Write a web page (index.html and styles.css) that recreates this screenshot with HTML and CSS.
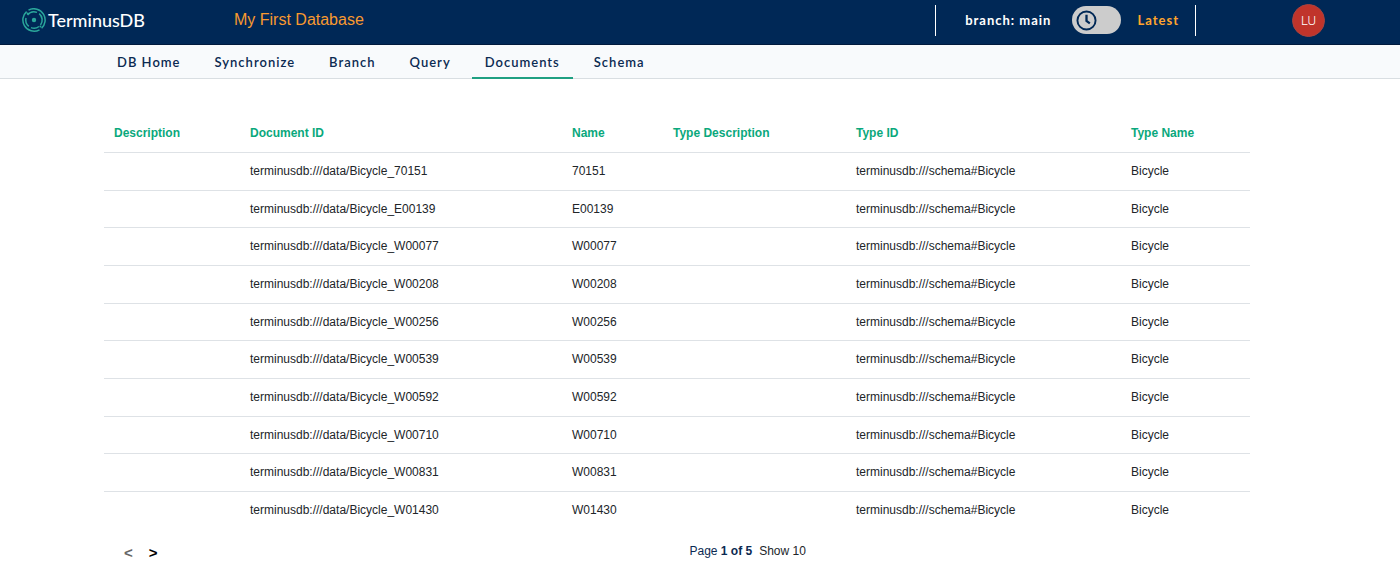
FILE: index.html
```html
<!DOCTYPE html>
<html lang="en">
<head>
    <meta charset="UTF-8">
    <meta name="viewport" content="width=device-width, initial-scale=1.0">
    <title>TerminusDB - Documents</title>
    <link rel="stylesheet" href="styles.css">
</head>
<body>
    <header class="top-bar">
        <a href="#" class="brand">
            <svg class="brand-logo" viewBox="0 0 24 24" fill="none" stroke="#2aa79b" stroke-width="1.5" aria-hidden="true">
                <path d="M6.5 2.1A11.2 11.2 0 0 1 21.6 6.4A11.2 11.2 0 0 1 19.6 20.2"/>
                <path d="M17.5 21.8A11.2 11.2 0 0 1 2.4 17.6A11.2 11.2 0 0 1 4.6 3.6"/>
                <path d="M5.5 7A8.2 8.2 0 0 1 15 4.4M17.2 5.7A8.2 8.2 0 0 1 18.5 17M17 18.5A8.2 8.2 0 0 1 9 19.6M6.8 18.3A8.2 8.2 0 0 1 4 10"/>
                <circle cx="12" cy="12" r="2.2" fill="#2aa79b" stroke="none"/>
                <circle cx="5.6" cy="5.6" r="1" fill="#2aa79b" stroke="none"/>
                <circle cx="18.4" cy="18.4" r="1" fill="#2aa79b" stroke="none"/>
            </svg>
            <span class="brand-name">TerminusDB</span>
        </a>
        <a href="#" class="db-name">My First Database</a>
        <div class="branch-box">
            <span class="branch-name">branch: main</span>
            <button type="button" class="time-toggle" aria-label="Time travel">
                <svg class="clock" viewBox="0 0 22 22" fill="none" stroke="#002856" stroke-width="2" aria-hidden="true">
                    <circle cx="11" cy="11" r="9.5"/>
                    <path d="M11 5V11.5L14.5 14" stroke-width="2.4"/>
                </svg>
            </button>
            <span class="latest">Latest</span>
        </div>
        <button type="button" class="avatar">LU</button>
    </header>

    <nav class="nav-bar">
        <a href="#" class="nav-link">DB Home</a>
        <a href="#" class="nav-link">Synchronize</a>
        <a href="#" class="nav-link">Branch</a>
        <a href="#" class="nav-link">Query</a>
        <a href="#" class="nav-link active">Documents</a>
        <a href="#" class="nav-link">Schema</a>
    </nav>

    <main class="content">
        <table class="documents">
            <colgroup>
                <col class="col-description">
                <col class="col-id">
                <col class="col-name">
                <col class="col-type-description">
                <col class="col-type-id">
                <col class="col-type-name">
            </colgroup>
            <thead>
                <tr><th>Description</th><th>Document ID</th><th>Name</th><th>Type Description</th><th>Type ID</th><th>Type Name</th></tr>
            </thead>
            <tbody>
                <tr><td></td><td>terminusdb:///data/Bicycle_70151</td><td>70151</td><td></td><td>terminusdb:///schema#Bicycle</td><td>Bicycle</td></tr>
                <tr><td></td><td>terminusdb:///data/Bicycle_E00139</td><td>E00139</td><td></td><td>terminusdb:///schema#Bicycle</td><td>Bicycle</td></tr>
                <tr><td></td><td>terminusdb:///data/Bicycle_W00077</td><td>W00077</td><td></td><td>terminusdb:///schema#Bicycle</td><td>Bicycle</td></tr>
                <tr><td></td><td>terminusdb:///data/Bicycle_W00208</td><td>W00208</td><td></td><td>terminusdb:///schema#Bicycle</td><td>Bicycle</td></tr>
                <tr><td></td><td>terminusdb:///data/Bicycle_W00256</td><td>W00256</td><td></td><td>terminusdb:///schema#Bicycle</td><td>Bicycle</td></tr>
                <tr><td></td><td>terminusdb:///data/Bicycle_W00539</td><td>W00539</td><td></td><td>terminusdb:///schema#Bicycle</td><td>Bicycle</td></tr>
                <tr><td></td><td>terminusdb:///data/Bicycle_W00592</td><td>W00592</td><td></td><td>terminusdb:///schema#Bicycle</td><td>Bicycle</td></tr>
                <tr><td></td><td>terminusdb:///data/Bicycle_W00710</td><td>W00710</td><td></td><td>terminusdb:///schema#Bicycle</td><td>Bicycle</td></tr>
                <tr><td></td><td>terminusdb:///data/Bicycle_W00831</td><td>W00831</td><td></td><td>terminusdb:///schema#Bicycle</td><td>Bicycle</td></tr>
                <tr><td></td><td>terminusdb:///data/Bicycle_W01430</td><td>W01430</td><td></td><td>terminusdb:///schema#Bicycle</td><td>Bicycle</td></tr>
            </tbody>
        </table>
        <div class="pager">
            <div class="pager-buttons">
                <button type="button" class="pager-button" aria-label="Previous page" disabled>&lt;</button>
                <button type="button" class="pager-button" aria-label="Next page">&gt;</button>
            </div>
            <div class="pager-info">
                <span class="page-count">Page <strong>1 of 5</strong></span>
                <span>Show 10</span>
            </div>
        </div>
    </main>
</body>
</html>
```
FILE: styles.css
```css
* {
    box-sizing: border-box;
}

body {
    margin: 0;
    background-color: #fff;
    color: #212529;
    font-family: "Liberation Sans", Arial, sans-serif;
    font-size: 12px;
}

a {
    text-decoration: none;
}

button {
    padding: 0;
    border: none;
    font-family: inherit;
    cursor: pointer;
}

/* Top bar */
.top-bar {
    display: flex;
    align-items: center;
    height: 45px;
    padding: 0 75px 4px 22px;
    background-color: #002856;
    border-bottom: 1px solid #001a3d;
}

.brand {
    display: flex;
    align-items: center;
    gap: 2px;
    width: 212px;
    color: #fff;
}

.brand-logo {
    width: 24px;
    height: 24px;
}

.brand-name {
    font-family: Lato, sans-serif;
    font-size: 18px;
    font-weight: 500;
}

.db-name {
    color: #f8992f;
    font-size: 16px;
}

.branch-box {
    display: flex;
    align-items: center;
    height: 31px;
    margin-left: auto;
    padding: 0 16px 0 29px;
    border-left: 1px solid #fff;
    border-right: 1px solid #fff;
    color: #fff;
    font-family: Lato, sans-serif;
    font-size: 13px;
    font-weight: 700;
    letter-spacing: 1px;
}

.time-toggle {
    display: flex;
    align-items: center;
    width: 49px;
    height: 28px;
    margin: 0 16px 0 21px;
    padding-left: 4px;
    border-radius: 14px;
    background-color: #ccc;
}

.clock {
    width: 21px;
    height: 21px;
}

.latest {
    color: #ffa52d;
}

.avatar {
    width: 33px;
    height: 33px;
    margin-left: 96px;
    border: 1px solid #a8433f;
    border-radius: 50%;
    background-color: #c0342b;
    color: #fff;
    font-family: Roboto, sans-serif;
    font-size: 13px;
    font-weight: 300;
}

/* Navigation */
.nav-bar {
    display: flex;
    height: 34px;
    padding: 0 104px;
    background-color: #f8fafc;
    border-bottom: 1px solid #d9dee2;
}

.nav-link {
    height: 34px;
    padding: 0 13px;
    margin-right: 8px;
    color: #0b2a52;
    font-family: Lato, sans-serif;
    font-size: 13px;
    font-weight: 600;
    letter-spacing: 1px;
    line-height: 34px;
}

.nav-link.active {
    border-bottom: 2px solid #1fa082;
}

/* Documents table */
.content {
    padding: 35px 150px 0 104px;
}

.documents {
    width: 100%;
    table-layout: fixed;
    border-collapse: collapse;
}

.col-description { width: 136px; }
.col-id { width: 322px; }
.col-name { width: 101px; }
.col-type-description { width: 183px; }
.col-type-id { width: 275px; }
.col-type-name { width: 129px; }

.documents th,
.documents td {
    padding: 0 10px;
    text-align: left;
}

.documents th {
    height: 38px;
    color: #0aa87c;
}

.documents td {
    height: 38px;
    border-top: 1px solid #dee2e6;
}

.documents tr:nth-child(3n + 2) td {
    height: 37px;
}

/* Pagination */
.pager {
    display: grid;
    grid-template-columns: 4fr auto 3fr;
    align-items: start;
    padding: 15px 20px 0;
}

.pager-buttons {
    display: flex;
    gap: 16px;
}

.pager-button {
    background: none;
    color: #000;
    font-size: 15px;
    font-weight: 700;
}

.pager-button:disabled {
    color: #666;
}

.pager-info {
    display: flex;
    gap: 7px;
}

.page-count {
    color: #0b2a52;
}
```
